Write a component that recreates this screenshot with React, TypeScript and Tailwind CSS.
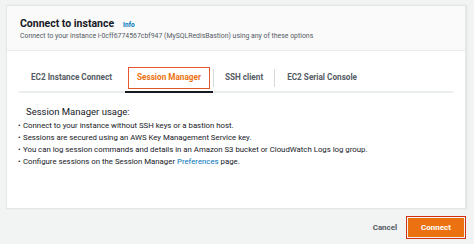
const tabs = ["EC2 Instance Connect", "Session Manager", "SSH client", "EC2 Serial Console"];

const bullets = [
  "Connect to your instance without SSH keys or a bastion host.",
  "Sessions are secured using an AWS Key Management Service key.",
  "You can log session commands and details in an Amazon S3 bucket or CloudWatch Logs log group.",
];

const App = () => {
  return (
    <div className="w-[474px] h-[244px] overflow-hidden bg-[#f2f3f3] pt-[5px] pl-[6px] pr-[8px] font-['Roboto',sans-serif] text-[#16191f]">
      <div className="h-[204px] bg-white border border-[#e4e7e7] shadow-[1px_0_2px_rgba(0,0,0,0.08)] flex flex-col">
        <div className="h-[45px] bg-[#fafafa] border-b border-[#eaeded] pl-[13px] pt-[11px]">
          <div className="flex items-baseline gap-[9px]">
            <span className="text-[10.5px] font-bold leading-[14px]">Connect to instance</span>
            <span className="text-[6.5px] font-bold text-[#0073bb]">Info</span>
          </div>
          <div className="text-[6.9px] leading-[9px] text-[#545b64] mt-[1px]">
            Connect to your instance i-0cff6774567cbf947 (MySQLRedisBastion) using any of these options
          </div>
        </div>

        <div className="px-[12px] pt-[13px]">
          <div className="flex items-center h-[29px] border-b-2 border-[#eaeded] text-[8.2px] font-bold text-[#545b64]">
            <div className="pl-[12px] pr-[13px]">{tabs[0]}</div>
            <div className="relative h-full flex items-center px-[3px]">
              <div className="h-[22px] px-[8px] flex items-center border-[1.5px] border-[#e4572e] text-[#ec7211]">
                {tabs[1]}
              </div>
              <div className="absolute left-0 right-0 bottom-[-2px] h-[2.5px] bg-[#16191f]" />
            </div>
            <div className="h-[18px] flex items-center px-[11px] border-l border-[#d5dbdb]">{tabs[2]}</div>
            <div className="h-[18px] flex items-center px-[12px] border-l border-[#d5dbdb]">{tabs[3]}</div>
          </div>

          <div className="pt-[12px] pl-[7px] text-[9.5px] leading-[13px]">Session Manager usage:</div>
          <ul className="mt-[2px] text-[7.8px] leading-[12px] -ml-[1px]">
            {bullets.map((b) => (
              <li key={b} className="flex">
                <span className="w-[5px]">•</span>
                <span>{b}</span>
              </li>
            ))}
            <li className="flex">
              <span className="w-[5px]">•</span>
              <span>
                Configure sessions on the Session Manager <span className="text-[#0073bb]">Preferences</span> page.
              </span>
            </li>
          </ul>
        </div>
      </div>

      <div className="flex justify-end items-center gap-[9px] pt-[7px]">
        <span className="text-[7.9px] font-bold text-[#545b64]">Cancel</span>
        <div className="p-[1px] border-[1.5px] border-[#d13212]">
          <div className="w-[56px] h-[19px] bg-[#ec7211] flex items-center justify-center text-[8px] font-bold text-white">
            Connect
          </div>
        </div>
      </div>
    </div>
  );
};

export default App;
